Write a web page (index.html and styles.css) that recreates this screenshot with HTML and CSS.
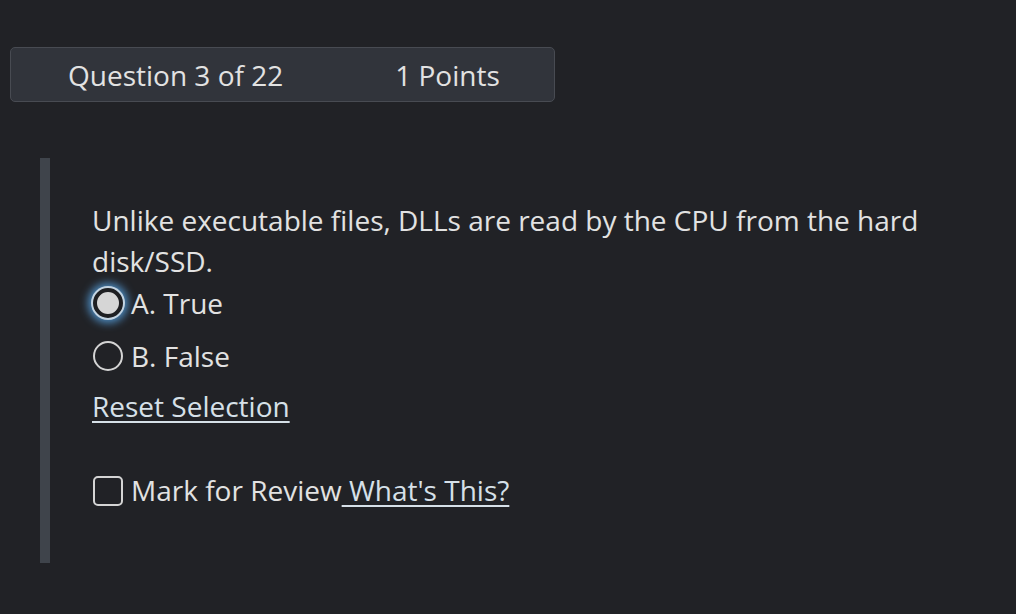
FILE: index.html
```html
<!DOCTYPE html>
<html>
<head>
<meta charset="utf-8">
<link rel="stylesheet" href="styles.css">
</head>
<body>
<div class="header">
  <span class="qnum">Question 3 of 22</span>
  <span class="points">1 Points</span>
</div>
<div class="question">
  <div class="prompt">Unlike executable files, DLLs are read by the CPU from the hard disk/SSD.</div>
  <div class="option option-a"><span class="radio selected"></span><span>A. True</span></div>
  <div class="option option-b"><span class="radio"></span><span>B. False</span></div>
  <div class="reset"><a href="#">Reset Selection</a></div>
  <div class="review"><span class="checkbox"></span><span>Mark for Review</span><a href="#">&nbsp;What's This?</a></div>
</div>
</body>
</html>
```
FILE: styles.css
```css
html, body {
  margin: 0;
  padding: 0;
  background: #212226;
  color: #e2e2e2;
  font-family: "Open Sans", "Noto Sans", sans-serif;
  font-size: 28px;
  height: 100%;
}
body {
  padding-top: 47px;
  box-sizing: border-box;
}
.header {
  margin-left: 10px;
  width: 545px;
  height: 55px;
  box-sizing: border-box;
  background: #31343b;
  border: 1px solid #484b52;
  border-radius: 5px;
  display: flex;
  align-items: center;
  padding-left: 57px;
  gap: 112px;
  line-height: 1;
}
.question {
  margin-top: 56px;
  margin-left: 40px;
  border-left: 10px solid #3f444b;
  padding: 42px 16px 52px 42px;
  line-height: 41px;
}
.option {
  display: flex;
  align-items: center;
  height: 42px;
}
.option-b {
  margin-top: 11px;
}
.radio {
  width: 30px;
  height: 30px;
  box-sizing: border-box;
  border: 2px solid #d4d4d4;
  border-radius: 50%;
  margin-right: 8px;
  margin-left: 1px;
  flex: none;
}
.radio.selected {
  background: #d6d6d6;
  border: 4px solid #1e1f22;
  box-shadow: 0 0 0 2px #c3d4e2, 0 0 8px 5px rgba(86, 160, 222, 0.85);
}
.reset {
  margin-top: 9px;
}
a {
  color: #d6e0e8;
  text-decoration: underline;
  text-underline-offset: 4px;
  text-decoration-thickness: 2px;
}
.review {
  margin-top: 43px;
  display: flex;
  align-items: center;
  height: 41px;
}
.checkbox {
  width: 30px;
  height: 30px;
  box-sizing: border-box;
  border: 2px solid #d4d4d4;
  border-radius: 5px;
  margin-left: 1px;
  margin-right: 8px;
  flex: none;
}
.review a {
  white-space: pre;
}
```
